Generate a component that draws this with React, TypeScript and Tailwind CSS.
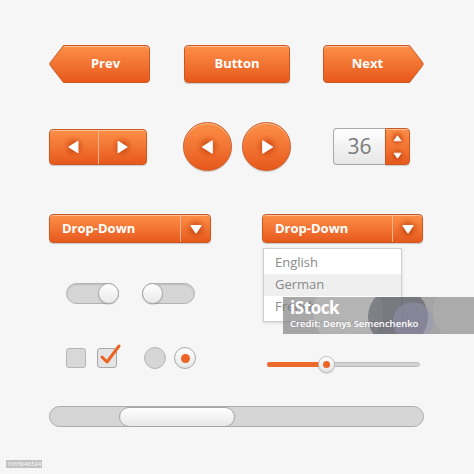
import React from 'react';

const orange = 'bg-linear-to-b from-[#fc8f47] to-[#e7581c] border border-[#cc5820] shadow-[inset_0_1px_0_rgba(255,255,255,0.45),0_1px_1px_rgba(0,0,0,0.18)]';

const Defs = () => (
  <svg width="0" height="0" className="absolute">
    <defs>
      <linearGradient id="og" x1="0" y1="0" x2="0" y2="1">
        <stop offset="0" stopColor="#fc9049" />
        <stop offset="1" stopColor="#e7571b" />
      </linearGradient>
      <radialGradient id="glow">
        <stop offset="0.35" stopColor="#c2400e" stopOpacity="0.6" />
        <stop offset="1" stopColor="#e8621f" stopOpacity="0" />
      </radialGradient>
    </defs>
  </svg>
);

type Dir = 'left' | 'right' | 'up' | 'down';

const Tri = ({ dir, size = 22 }: { dir: Dir; size?: number }) => {
  const pts: Record<Dir, string> = {
    left: '6.5,11 14.5,6 14.5,16',
    right: '15.5,11 7.5,6 7.5,16',
    up: '11,7.5 6.5,14 15.5,14',
    down: '11,14.5 6.5,8 15.5,8',
  };
  return (
    <svg width={size} height={size} viewBox="0 0 22 22">
      <circle cx="11" cy="11" r="11" fill="url(#glow)" />
      <polygon points={pts[dir]} fill="#fff" stroke="#fff" strokeWidth="1.2" strokeLinejoin="round" />
    </svg>
  );
};

const ArrowButton = ({ label, dir, className }: { label: string; dir: 'left' | 'right'; className: string }) => (
  <div className={`relative h-[38px] flex items-center justify-center ${className}`}>
    <svg
      className={`absolute inset-0 ${dir === 'right' ? '-scale-x-100' : ''}`}
      width="101"
      height="38"
      viewBox="0 0 101 38"
    >
      <path
        d="M14.5 0.5 H97 a3.5 3.5 0 0 1 3.5 3.5 V34 a3.5 3.5 0 0 1 -3.5 3.5 H14.5 L1.4 20.6 a2.6 2.6 0 0 1 0 -3.2 Z"
        fill="url(#og)"
        stroke="#cc5820"
      />
      <path d="M15 1.6 H97 a2.6 2.6 0 0 1 2.4 2" fill="none" stroke="#ffffff" strokeOpacity="0.45" />
    </svg>
    <span className={`relative text-white text-[13px] font-bold ${dir === 'left' ? 'ml-[12px]' : 'mr-[12px]'}`}>{label}</span>
  </div>
);

const Dropdown = ({ width }: { width: string }) => (
  <div className={`flex h-[29px] ${width} rounded-[4px] ${orange}`}>
    <div className="flex-1 flex items-center pl-[12px] text-white text-[13px] font-bold">Drop-Down</div>
    <div className="w-[30px] flex items-center justify-center border-l border-[#f7b48c]">
      <Tri dir="down" size={24} />
    </div>
  </div>
);

const Toggle = ({ on }: { on: boolean }) => (
  <div className={`flex h-[21px] w-[53px] items-center rounded-full bg-[#d6d6d6] border border-[#b3b3b3] shadow-[inset_0_1px_2px_rgba(0,0,0,0.12)] ${on ? 'justify-end' : 'justify-start'}`}>
    <div className="h-[21px] w-[21px] -m-px rounded-full bg-linear-to-b from-white to-[#e9e9e9] border border-[#a8a8a8] shadow-[0_1px_1px_rgba(0,0,0,0.15)]" />
  </div>
);

export default function App() {
  return (
    <div className="relative w-[474px] h-[474px] overflow-hidden bg-[#f6f6f6] pl-[49px] pt-[45px] font-['Open_Sans','Liberation_Sans',sans-serif]">
      <Defs />

      {/* buttons */}
      <div className="flex h-[38px] items-center">
        <ArrowButton label="Prev" dir="left" className="w-[101px]" />
        <div className={`ml-[34px] w-[106px] h-[38px] rounded-[4px] flex items-center justify-center text-white text-[13px] font-bold ${orange}`}>
          Button
        </div>
        <ArrowButton label="Next" dir="right" className="ml-[33px] w-[101px]" />
      </div>

      {/* arrows + number */}
      <div className="mt-[39px] flex h-[49px] items-center">
        <div className={`flex h-[36px] w-[98px] rounded-[4px] ${orange}`}>
          <div className="flex-1 flex items-center justify-center border-r border-[#f7b48c]">
            <Tri dir="left" size={24} />
          </div>
          <div className="flex-1 flex items-center justify-center">
            <Tri dir="right" size={24} />
          </div>
        </div>
        <div className={`ml-[36px] h-[49px] w-[49px] rounded-full flex items-center justify-center ${orange}`}>
          <Tri dir="left" size={26} />
        </div>
        <div className={`ml-[10px] h-[49px] w-[49px] rounded-full flex items-center justify-center ${orange}`}>
          <Tri dir="right" size={26} />
        </div>
        <div className="ml-[42px] flex h-[37px] w-[77px]">
          <div className="flex-1 flex items-center justify-center rounded-l-[4px] border border-r-0 border-[#a9a9a9] bg-linear-to-b from-white to-[#e6e6e6] text-[21px] text-[#7b7b7b]">
            36
          </div>
          <div className={`w-[25px] flex flex-col items-center justify-center rounded-r-[4px] ${orange}`}>
            <Tri dir="up" size={17} />
            <Tri dir="down" size={17} />
          </div>
        </div>
      </div>

      {/* dropdowns */}
      <div className="mt-[43px] flex h-[29px]">
        <Dropdown width="w-[162px]" />
        <div className="relative ml-[51px]">
          <Dropdown width="w-[161px]" />
          <div className="absolute left-px top-[34px] w-[139px] bg-white border border-[#cfcfcf] shadow-[0_1px_3px_rgba(0,0,0,0.12)] py-[3px] text-[13px] text-[#8a8a8a]">
            <div className="h-[22px] flex items-center pl-[11px]">English</div>
            <div className="h-[22px] flex items-center pl-[11px] bg-[#efefef]">German</div>
            <div className="h-[22px] flex items-center pl-[11px]">French</div>
          </div>
        </div>
      </div>

      {/* toggles */}
      <div className="mt-[40px] flex h-[21px] pl-[17px] gap-[23px]">
        <Toggle on />
        <Toggle on={false} />
      </div>

      {/* checkboxes, radios, slider */}
      <div className="mt-[43px] flex h-[22px] items-center pl-[17px]">
        <div className="h-[20px] w-[20px] rounded-[3px] bg-[#d8d8d8] border border-[#b5b5b5]" />
        <div className="relative ml-[11px] h-[20px] w-[20px] rounded-[3px] bg-[#e4e4e4] border border-[#a9a9a9]">
          <svg className="absolute -top-[6px] left-0" width="24" height="24" viewBox="0 0 24 24">
            <path d="M4 14 L9 19 L21 3" fill="none" stroke="#ec6425" strokeWidth="3" strokeLinecap="round" strokeLinejoin="round" />
          </svg>
        </div>
        <div className="ml-[27px] h-[22px] w-[22px] rounded-full bg-[#d6d6d6] border border-[#b5b5b5]" />
        <div className="ml-[8px] h-[22px] w-[22px] rounded-full bg-linear-to-b from-white to-[#e6e6e6] border border-[#a9a9a9] flex items-center justify-center">
          <div className="h-[9px] w-[9px] rounded-full bg-[#ec6425]" />
        </div>
        <div className="ml-[71px] mt-[12px] relative h-[17px] w-[153px] flex items-center">
          <div className="h-[5px] w-full rounded-full bg-[#d3d3d3] border border-[#bdbdbd]" />
          <div className="absolute left-0 top-[6px] h-[5px] w-[60px] rounded-full bg-[#ec6a2a]" />
          <div className="absolute left-[51px] top-0 h-[17px] w-[17px] rounded-full bg-linear-to-b from-white to-[#e4e4e4] border border-[#bdbdbd] shadow-[0_1px_1px_rgba(0,0,0,0.15)] flex items-center justify-center">
            <div className="h-[7px] w-[7px] rounded-full bg-[#ec6425]" />
          </div>
        </div>
      </div>

      {/* scrollbar */}
      <div className="mt-[37px] h-[21px] w-[375px] rounded-full bg-[#d6d6d6] border border-[#acacac] pl-[69px] flex items-center">
        <div className="h-[20px] w-[116px] rounded-full bg-linear-to-b from-white to-[#e8e8e8] border border-[#a5a5a5]" />
      </div>

      {/* watermark */}
      <div className="absolute left-[283px] top-[297px] w-[191px] h-[37px] overflow-hidden bg-[#7a7a7a]/65">
        <div className="absolute left-[30px] -top-[20px] h-[70px] w-[70px] rounded-full bg-[#d0d0d0]/30" />
        <div className="absolute left-[85px] -top-[10px] h-[60px] w-[60px] rounded-full bg-[#4a4a58]/50" />
        <div className="absolute left-[110px] top-[5px] h-[40px] w-[40px] rounded-full bg-[#9a96b8]/45" />
        <div className="absolute left-[150px] -top-[15px] h-[60px] w-[60px] rounded-full bg-[#b8b8b8]/35" />
        <div className="relative pl-[7px] pt-[2px] text-white leading-none">
          <div className="text-[17px] font-bold tracking-tight">iStock</div>
          <div className="mt-[3px] text-[9.5px] font-semibold">Credit: Denys Semenchenko</div>
        </div>
      </div>

      {/* image id */}
      <div className="absolute left-[6px] top-[460px] h-[8px] w-[36px] bg-[#c2c2c2] text-[6px] leading-[8px] text-white text-center">
        1065846324
      </div>
    </div>
  );
}
